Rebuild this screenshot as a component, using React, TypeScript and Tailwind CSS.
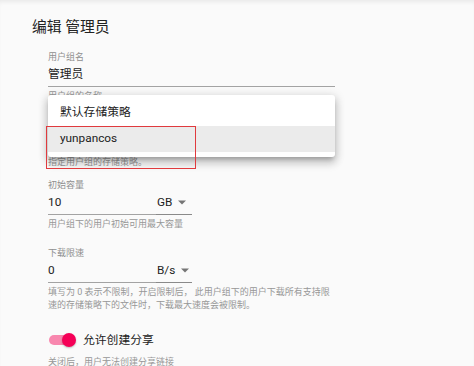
import React from 'react'

const FONT = "font-['Roboto','Noto_Sans_CJK_SC',sans-serif]"

function Caret() {
  return (
    <svg width="8" height="5" viewBox="0 0 10 5" className="ml-[6px]">
      <path d="M0 0l5 5 5-5z" fill="#757575" />
    </svg>
  )
}

function Field({
  label,
  value,
  unit,
  helper,
  width,
  className = '',
  hidden = false,
}: {
  label: string
  value: string
  unit?: string
  helper: React.ReactNode
  width: string
  className?: string
  hidden?: boolean
}) {
  return (
    <div className={`${width} ${className}`}>
      <div className={`h-[12px] text-[9px] leading-[12px] text-[#8f8f8f] ${hidden ? 'invisible' : ''}`}>
        {label}
      </div>
      <div className="mt-[3px] flex h-[21px]">
        <div className="flex-1 border-b border-[#a3a3a3] text-[11.8px] leading-[16px] text-[#222]">
          <span className={hidden ? 'invisible' : ''}>{value}</span>
        </div>
        {unit && (
          <div className="flex w-[36px] items-start border-b border-[#8a8a8a] pl-[1px] text-[11.8px] leading-[16px] text-[#222]">
            {unit}
            <span className="mt-[6px]">
              <Caret />
            </span>
          </div>
        )}
      </div>
      <div className="mt-[3px] text-[9px] leading-[13px] text-[#979797]">{helper}</div>
    </div>
  )
}

export default function App() {
  return (
    <div
      className={`${FONT} relative h-[366px] w-[474px] overflow-hidden bg-[#fafafa] shadow-[inset_0_4px_4px_-2px_rgba(0,0,0,0.07)]`}
    >
      <div className="pl-[32px] pt-[17px]">
        <h1 className="h-[20px] text-[14.8px] leading-[20px] text-[#222]">编辑 管理员</h1>
      </div>

      <div className="pl-[48px]">
        <Field
          className="mt-[14px]"
          width="w-[287px]"
          label="用户组名"
          value="管理员"
          helper="用户组的名称"
        />
        <Field
          className="mt-[14px]"
          width="w-[287px]"
          label="存储策略"
          value="默认存储策略"
          helper="指定用户组的存储策略。"
          hidden
        />
        <Field
          className="mt-[10px]"
          width="w-[144px]"
          label="初始容量"
          value="10"
          unit="GB"
          helper="用户组下的用户初始可用最大容量"
        />
        <Field
          className="mt-[16px]"
          width="w-[144px]"
          label="下载限速"
          value="0"
          unit="B/s"
          helper={
            <span className="block w-[300px]">
              填写为 0 表示不限制，开启限制后， 此用户组下的用户下载所有支持限
              <br />
              速的存储策略下的文件时，下载最大速度会被限制。
            </span>
          }
        />

        <div className="mt-[18px] flex h-[20px] items-center">
          <div className="relative flex h-[14px] w-[28px] items-center">
            <div className="ml-[1px] h-[10px] w-[24px] rounded-full bg-[#f887ae]" />
            <div className="absolute right-0 top-0 h-[14px] w-[14px] rounded-full bg-[#f50057] shadow-[0_1px_2px_rgba(0,0,0,0.25)]" />
          </div>
          <span className="ml-[7px] text-[11.8px] leading-[16px] text-[#222]">允许创建分享</span>
        </div>
        <div className="mt-[6px] text-[9px] leading-[13px] text-[#979797]">关闭后，用户无法创建分享链接</div>
      </div>

      {/* select menu */}
      <div className="absolute left-[48px] top-[95px] w-[287px] rounded-[3px] bg-white py-[5px] shadow-[0_4px_4px_-2px_rgba(0,0,0,0.2),0_6px_8px_1px_rgba(0,0,0,0.14),0_2px_10px_2px_rgba(0,0,0,0.12)]">
        <div className="flex h-[26px] items-center px-[12px] text-[11.8px] text-[#222]">默认存储策略</div>
        <div className="flex h-[26px] items-center bg-[#ebebeb] px-[12px] text-[11.8px] text-[#222]">yunpancos</div>
      </div>

      {/* annotation box */}
      <div className="absolute left-[46px] top-[126px] h-[43px] w-[150px] border-[1.5px] border-[#e03a3e]" />
    </div>
  )
}
